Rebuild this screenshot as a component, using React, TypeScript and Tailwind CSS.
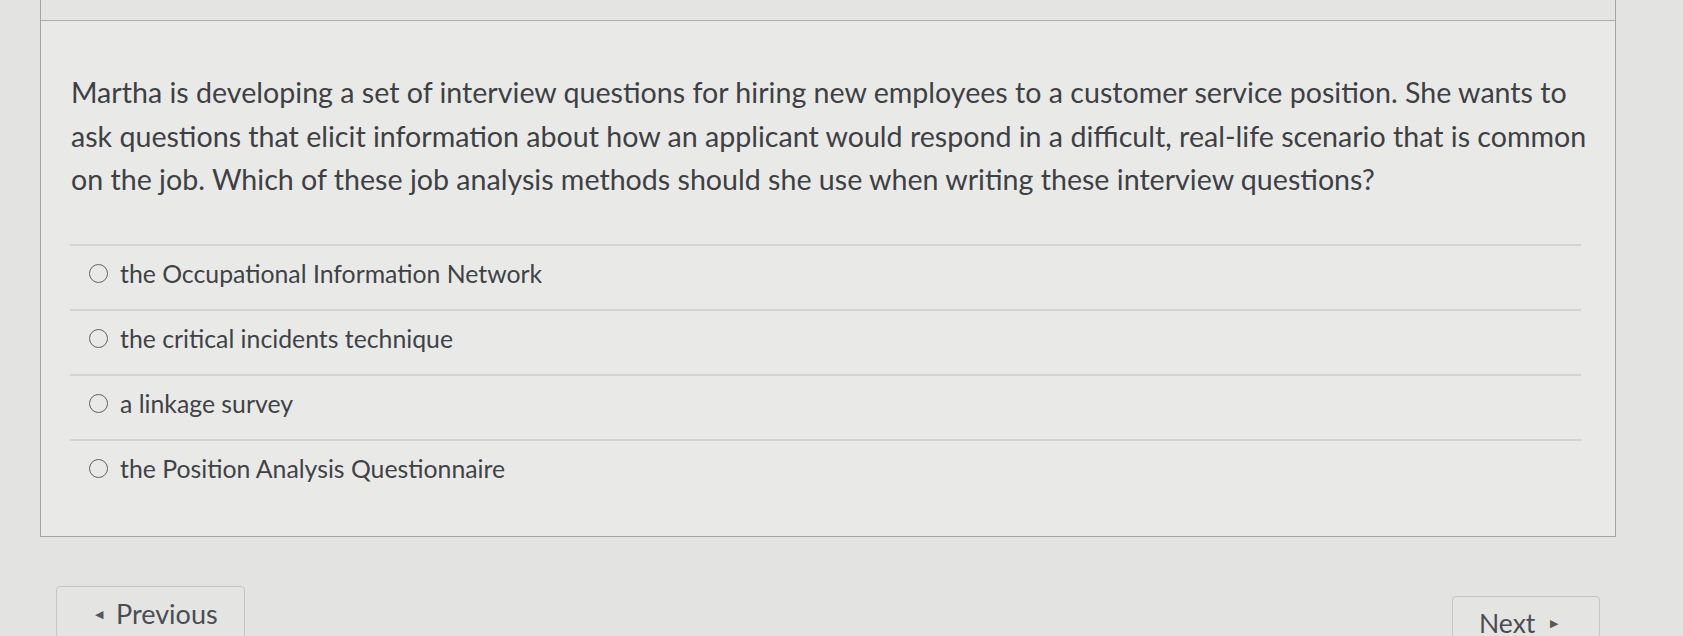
import React from 'react';

const options = [
  'the Occupational Information Network',
  'the critical incidents technique',
  'a linkage survey',
  'the Position Analysis Questionnaire',
];

const font = { fontFamily: 'Lato, "Open Sans", sans-serif' };

export default function App() {
  return (
    <div className="h-[636px] overflow-hidden bg-[#e3e4e2] pl-[40px] pr-[67px] text-[#3e4044]" style={font}>
      <div className="border-x border-b border-[#a3a5a5] bg-[#e9eae8]">
        <div className="h-[20px] bg-[#e4e5e3]" />
        <div className="border-t border-[#aeb0b0] pt-[50px] pb-[32px]">
          <p className="pl-[30px] whitespace-nowrap text-[28.6px] leading-[43.5px]">
            Martha is developing a set of interview questions for hiring new employees to a customer service position. She wants to
            <br />
            ask questions that elicit information about how an applicant would respond in a difficult, real-life scenario that is common
            <br />
            on the job. Which of these job analysis methods should she use when writing these interview questions?
          </p>

          <div className="mt-[42px] ml-[29px] mr-[34px]">
            {options.map((opt) => (
              <div key={opt} className="border-t-2 border-[#d3d5d4] h-[65px] flex items-start pt-[13px]">
                <label className="flex items-center gap-[12px] pl-[19px] cursor-pointer">
                  <span className="w-[19px] h-[19px] rounded-full border-[1.5px] border-[#5f6266] shrink-0" />
                  <span className="text-[24.8px] leading-[30px] text-[#404246]">{opt}</span>
                </label>
              </div>
            ))}
          </div>
        </div>
      </div>

      <div className="flex justify-between items-start mt-[49px] px-[16px]">
        <button className="w-[189px] h-[64px] rounded-[4px] border border-[#c3c5c4] bg-[#e4e5e3] flex items-start pt-[11px] pl-[38px] gap-[13px] text-[27px] leading-[32px] text-[#4a4d52]">
          <span className="text-[11px] leading-[32px] text-[#55585c]">◀</span>
          Previous
        </button>
        <button className="w-[148px] h-[64px] mt-[10px] rounded-[4px] border border-[#c3c5c4] bg-[#e4e5e3] flex items-start pt-[10px] pl-[26px] gap-[15px] text-[26.5px] leading-[32px] text-[#4a4d52]">
          Next
          <span className="text-[11px] leading-[32px] text-[#55585c]">▶</span>
        </button>
      </div>
    </div>
  );
}
